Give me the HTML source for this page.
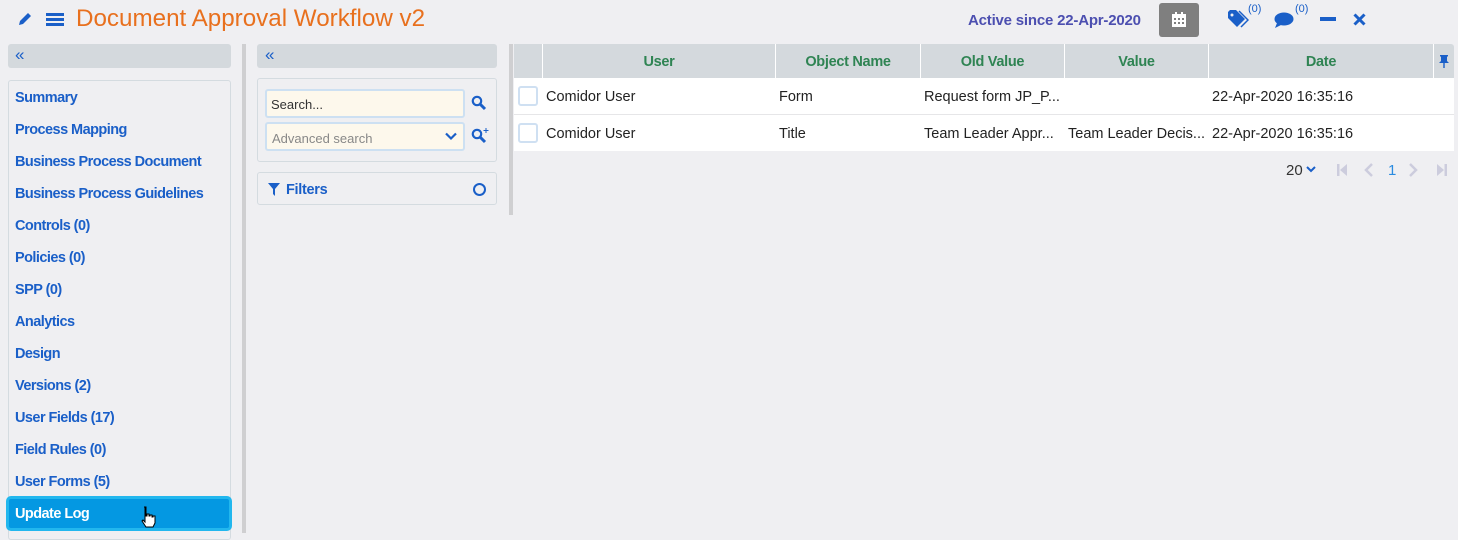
<!DOCTYPE html>
<html><head><style>
*{box-sizing:border-box;margin:0;padding:0}
body{width:1458px;height:533px;background:#efeff2;font-family:"Liberation Sans",sans-serif;position:relative;overflow:hidden;color:#222}
.a{position:absolute}
.nav a{display:block;position:absolute;left:15px;color:#1a5fc8;font-size:14.5px;font-weight:bold;letter-spacing:-.55px}
.th{position:absolute;top:44px;height:34px;line-height:36px;text-align:center;color:#2f8453;font-size:14.5px;font-weight:bold;border-left:1px solid #fff;letter-spacing:-.3px}
.td{position:absolute;font-size:14.5px;color:#222}
.cb{position:absolute;left:518px;width:20px;height:20px;border:2px solid #cfe0f2;border-radius:3px;background:#fff}
</style></head><body>
<svg class="a" style="left:17px;top:11px" width="16" height="16" viewBox="0 0 16 16"><path d="M2 14l1-4 8-8 3 3-8 8z" fill="#1a5fc8"/></svg>
<div class="a" style="left:46px;top:13px;width:18px;height:3px;background:#1a5fc8;box-shadow:0 5px 0 #1a5fc8,0 10px 0 #1a5fc8"></div>
<div class="a" style="left:76px;top:5px;font-size:24.2px;color:#e8701e">Document Approval Workflow v2</div>
<div class="a" style="left:968px;top:12px;font-size:15px;font-weight:bold;color:#4c4fb0;letter-spacing:-.2px">Active since 22-Apr-2020</div>
<div class="a" style="left:1159px;top:3px;width:40px;height:34px;background:#7f7f7f;border-radius:3px"></div>
<svg class="a" style="left:1171px;top:11px" width="16" height="17" viewBox="0 0 16 17"><rect x="1" y="3" width="14" height="13" fill="#fff"/><rect x="4" y="1" width="2" height="3" fill="#fff"/><rect x="10" y="1" width="2" height="3" fill="#fff"/><g fill="#7f7f7f"><rect x="3" y="7" width="2" height="2"/><rect x="7" y="7" width="2" height="2"/><rect x="11" y="7" width="2" height="2"/><rect x="3" y="11" width="2" height="2"/><rect x="7" y="11" width="2" height="2"/><rect x="11" y="11" width="2" height="2"/></g></svg>
<svg class="a" style="left:1227px;top:10px" width="22" height="18" viewBox="0 0 22 18"><path d="M1 2v6l9 9 8-8-9-9H3z" fill="#1a5fc8"/><circle cx="5" cy="5" r="1.5" fill="#efeff2"/><path d="M12 1l9 9-7 7" stroke="#1a5fc8" stroke-width="1.5" fill="none"/></svg>
<div class="a" style="left:1248px;top:3px;font-size:11px;color:#1a5fc8">(0)</div>
<svg class="a" style="left:1274px;top:12px" width="20" height="17" viewBox="0 0 20 17"><ellipse cx="10" cy="7" rx="9.5" ry="6.5" fill="#1a5fc8"/><path d="M3 11l-2 5 6-3z" fill="#1a5fc8"/></svg>
<div class="a" style="left:1295px;top:3px;font-size:11px;color:#1a5fc8">(0)</div>
<div class="a" style="left:1320px;top:17px;width:16px;height:4px;background:#1a5fc8"></div>
<svg class="a" style="left:1353px;top:13px" width="13" height="13" viewBox="0 0 13 13"><path d="M1.5 1.5l10 10M11.5 1.5l-10 10" stroke="#1a5fc8" stroke-width="3"/></svg>
<div class="a" style="left:8px;top:44px;width:223px;height:24px;background:#d4d9dd;border-radius:3px"></div>
<div class="a" style="left:15px;top:44px;font-size:17px;color:#1a5fc8;line-height:22px">«</div>
<div class="a" style="left:8px;top:80px;width:223px;height:460px;border:1px solid #d4dbe0;border-radius:3px"></div>
<div class="nav">
<a style="top:90px">Summary</a><a style="top:122px">Process Mapping</a><a style="top:154px">Business Process Document</a><a style="top:186px">Business Process Guidelines</a><a style="top:218px">Controls (0)</a><a style="top:250px">Policies (0)</a><a style="top:282px">SPP (0)</a><a style="top:314px">Analytics</a><a style="top:346px">Design</a><a style="top:378px">Versions (2)</a><a style="top:410px">User Fields (17)</a><a style="top:442px">Field Rules (0)</a><a style="top:474px">User Forms (5)</a>
</div>
<div class="a" style="left:6px;top:496px;width:226px;height:35px;background:#0498e2;border:3px solid #22b7ee;border-radius:5px"></div>
<div class="a" style="left:15px;top:506px;font-size:14.5px;font-weight:bold;color:#fff;letter-spacing:-.55px">Update Log</div>
<svg class="a" style="left:141px;top:506px" width="16" height="22" viewBox="0 0 16 22"><path d="M3 1h2v9h1V8h2v2h1V9h2v2h1v-1h2v7l-2 4H5l-4-6 1-1 2 2V1z" fill="#fff" stroke="#000" stroke-width="1"/></svg>
<div class="a" style="left:242px;top:44px;width:4px;height:489px;background:#cfcfd1"></div>
<div class="a" style="left:257px;top:44px;width:240px;height:24px;background:#d4d9dd;border-radius:3px"></div>
<div class="a" style="left:265px;top:44px;font-size:17px;color:#1a5fc8;line-height:22px">«</div>
<div class="a" style="left:257px;top:78px;width:240px;height:84px;border:1px solid #d4dbe0;border-radius:3px"></div>
<div class="a" style="left:265px;top:89px;width:200px;height:29px;background:#fdf8ec;border:2px solid #cde0f2;border-radius:3px;font-size:13px;padding:6px 4px;color:#333">Search...</div>
<div class="a" style="left:265px;top:122px;width:200px;height:29px;background:#fdf8ec;border:2px solid #cde0f2;border-radius:3px;font-size:13px;padding:7px 5px;color:#888">Advanced search</div>
<svg class="a" style="left:445px;top:132px" width="12" height="9" viewBox="0 0 12 9"><path d="M1 1.5l5 5 5-5" stroke="#1a5fc8" stroke-width="2.2" fill="none"/></svg>
<svg class="a" style="left:471px;top:95px" width="16" height="16" viewBox="0 0 16 16"><circle cx="6" cy="6" r="4.2" stroke="#1a5fc8" stroke-width="2.2" fill="none"/><path d="M9 9l5 5" stroke="#1a5fc8" stroke-width="3"/></svg>
<svg class="a" style="left:471px;top:127px" width="18" height="17" viewBox="0 0 18 17"><circle cx="6" cy="7" r="4.2" stroke="#1a5fc8" stroke-width="2.2" fill="none"/><path d="M9 10l5 5" stroke="#1a5fc8" stroke-width="3"/><path d="M15 1v5M12.5 3.5h5" stroke="#1a5fc8" stroke-width="1"/></svg>
<div class="a" style="left:257px;top:172px;width:240px;height:33px;border:1px solid #d4dbe0;border-radius:3px"></div>
<svg class="a" style="left:268px;top:183px" width="12" height="13" viewBox="0 0 12 13"><path d="M0 0h12L7 6v7L5 11V6z" fill="#1a5fc8"/></svg>
<div class="a" style="left:286px;top:182px;font-size:14.5px;font-weight:bold;color:#1a5fc8;letter-spacing:-.3px">Filters</div>
<div class="a" style="left:473px;top:183px;width:13px;height:13px;border:2px solid #1a5fc8;border-radius:50%"></div>
<div class="a" style="left:509px;top:44px;width:4px;height:171px;background:#cfcfd1"></div>
<div class="a" style="left:514px;top:44px;width:940px;height:34px;background:#d4d9dd;border-radius:0 3px 0 0"></div>
<div class="th" style="left:542px;width:233px">User</div>
<div class="th" style="left:775px;width:145px">Object Name</div>
<div class="th" style="left:920px;width:144px">Old Value</div>
<div class="th" style="left:1064px;width:144px">Value</div>
<div class="th" style="left:1208px;width:225px">Date</div>
<div class="th" style="left:1433px;width:21px"></div>
<svg class="a" style="left:1438px;top:54px" width="12" height="14" viewBox="0 0 12 14"><path d="M2 1h8v1l-1 1v4l2 2H1l2-2V3L2 2zM5.3 9h1.4v5H5.3z" fill="#1a5fc8"/></svg>
<div class="a" style="left:514px;top:78px;width:940px;height:73px;background:#fff"></div>
<div class="a" style="left:514px;top:114px;width:940px;height:1px;background:#e6e6e8"></div>
<div class="cb" style="top:86px"></div><div class="cb" style="top:123px"></div>
<div class="td" style="left:546px;top:89px">Comidor User</div>
<div class="td" style="left:779px;top:89px">Form</div>
<div class="td" style="left:924px;top:89px">Request form JP_P...</div>
<div class="td" style="left:1212px;top:89px">22-Apr-2020 16:35:16</div>
<div class="td" style="left:546px;top:126px">Comidor User</div>
<div class="td" style="left:779px;top:126px">Title</div>
<div class="td" style="left:924px;top:126px">Team Leader Appr...</div>
<div class="td" style="left:1068px;top:126px">Team Leader Decis...</div>
<div class="td" style="left:1212px;top:126px">22-Apr-2020 16:35:16</div>
<div class="a" style="left:1286px;top:162px;font-size:15px;color:#333">20</div>
<svg class="a" style="left:1306px;top:166px" width="10" height="7" viewBox="0 0 10 7"><path d="M1 1l4 4 4-4" stroke="#1a5fc8" stroke-width="2" fill="none"/></svg>
<svg class="a" style="left:1336px;top:163px" width="12" height="14" viewBox="0 0 12 14"><rect x="1" y="1" width="2.5" height="12" fill="#ccd"/><path d="M11 1L4 7l7 6z" fill="#ccd"/></svg>
<svg class="a" style="left:1364px;top:163px" width="10" height="14" viewBox="0 0 10 14"><path d="M8 1L2 7l6 6" stroke="#ccd" stroke-width="2.5" fill="none"/></svg>
<div class="a" style="left:1388px;top:162px;font-size:15px;color:#2a8be0">1</div>
<svg class="a" style="left:1408px;top:163px" width="10" height="14" viewBox="0 0 10 14"><path d="M2 1l6 6-6 6" stroke="#ccd" stroke-width="2.5" fill="none"/></svg>
<svg class="a" style="left:1436px;top:163px" width="12" height="14" viewBox="0 0 12 14"><rect x="8.5" y="1" width="2.5" height="12" fill="#ccd"/><path d="M1 1l7 6-7 6z" fill="#ccd"/></svg>
</body></html>
